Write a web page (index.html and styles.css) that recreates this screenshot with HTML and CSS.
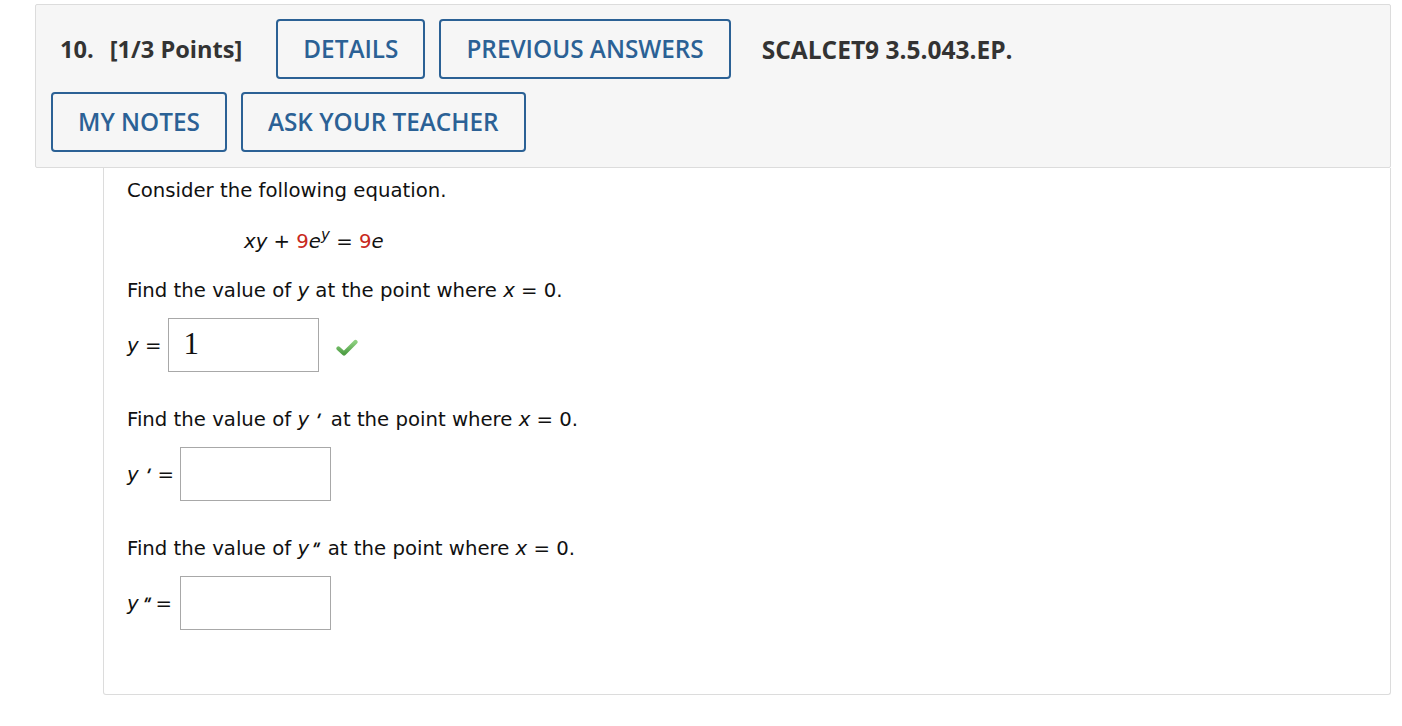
FILE: index.html
```html
<!DOCTYPE html>
<html>
<head>
<meta charset="utf-8">
<link rel="stylesheet" href="styles.css">
</head>
<body>
<div class="wrap">
  <div class="qhead">
    <div class="row">
      <span class="qnum">10.</span>
      <span class="qpts">[1/3 Points]</span>
      <button class="btn">DETAILS</button>
      <button class="btn">PREVIOUS ANSWERS</button>
      <span class="qid">SCALCET9 3.5.043.EP.</span>
    </div>
    <div class="row">
      <button class="btn">MY NOTES</button>
      <button class="btn">ASK YOUR TEACHER</button>
    </div>
  </div>
  <div class="qbody">
    <p class="line first">Consider the following equation.</p>
    <p class="eq"><i>xy</i> + <span class="red">9</span><i>e<sup>y</sup></i> = <span class="red">9</span><i>e</i></p>
    <p class="line">Find the value of <i>y</i> at the point where <i>x</i> = 0.</p>
    <div class="ans">
      <span class="lbl"><i>y</i> =</span>
      <span class="box box-a">1</span>
      <svg class="check" width="22" height="17" viewBox="0 0 22 17">
        <defs><linearGradient id="g" x1="0" y1="0" x2="0" y2="1"><stop offset="0" stop-color="#8ccf7e"/><stop offset="1" stop-color="#4f9e45"/></linearGradient></defs>
        <path d="M2.5 9.5 L8 14.5 L19.5 3" fill="none" stroke="url(#g)" stroke-width="4.2" stroke-linecap="round" stroke-linejoin="round"/>
      </svg>
    </div>
    <p class="line">Find the value of <i>y</i> <i class="pr">'</i> at the point where <i>x</i> = 0.</p>
    <div class="ans">
      <span class="lbl lbl-prime"><i>y</i> <i class="pr">'</i> =</span>
      <span class="box"></span>
    </div>
    <p class="line">Find the value of <i>y</i><i class="pr pr2">''</i> at the point where <i>x</i> = 0.</p>
    <div class="ans">
      <span class="lbl lbl-prime"><i>y</i> <i class="pr pr2">''</i> =</span>
      <span class="box"></span>
    </div>
  </div>
</div>
</body>
</html>
```
FILE: styles.css
```css
html, body { margin: 0; padding: 0; background: #fff; }
.wrap { margin: 4px 11px 0 35px; }
.qhead {
  background: #f6f6f6;
  border: 1px solid #dcdcdc;
  border-radius: 2px;
  padding: 14px 15px 15px 15px;
  font-family: "Open Sans", sans-serif;
}
.row { display: flex; align-items: center; gap: 14px; }
.row + .row { margin-top: 13px; }
.qnum, .qpts, .qid { font-weight: 700; font-size: 23.6px; color: #333; }
.qid { font-size: 24.5px; }
.qnum { margin-left: 9px; }
.qpts { margin-left: 2px; margin-right: 20px; }
.qid { margin-left: 17px; }
.btn {
  font-family: "Open Sans", sans-serif;
  font-weight: 600;
  font-size: 24.3px;
  color: #2b6195;
  background: transparent;
  border: 2px solid #2b6195;
  border-radius: 4px;
  height: 60px;
  padding: 0 25px;
  margin: 0;
  line-height: 1;
}
.qbody {
  margin-left: 68px;
  height: 526px;
  border: 1px solid #dcdcdc;
  border-top: none;
  border-radius: 0 0 3px 3px;
  padding: 0 23px;
  font-family: "DejaVu Sans", Verdana, sans-serif;
  font-size: 19.7px;
  color: #111;
}
.line { margin: 0; line-height: 22px; }
.first { padding-top: 12px; }
.eq { margin: 29px 0 0 117px; line-height: 22px; }
.eq sup { font-size: 15px; vertical-align: 8px; line-height: 0; }
.red { color: #c8291d; }
.eq + .line { margin-top: 27px; }
.pr { display: inline-block; font-weight: 700; font-size: 17px; transform: skewX(-22deg); margin-right: 4px; }
.pr2 { letter-spacing: -2px; margin-left: 2px; }
.lbl .pr { margin-right: 1px; }
.lbl .pr2 { margin-left: -3px; }
.ans { display: flex; align-items: center; margin: 16px 0 37px; }
.lbl { display: inline-block; margin-right: 7px; }
.lbl-prime { width: 46px; white-space: nowrap; }
.box {
  display: block;
  width: 149px;
  height: 52px;
  border: 1px solid #a8a8a8;
  background: #fff;
}
.box-a {
  font-family: "Liberation Serif", serif;
  font-size: 31px;
  line-height: 50px;
  padding-left: 14px;
  width: 135px;
}
.check { margin-left: 17px; margin-top: 4px; }
```
